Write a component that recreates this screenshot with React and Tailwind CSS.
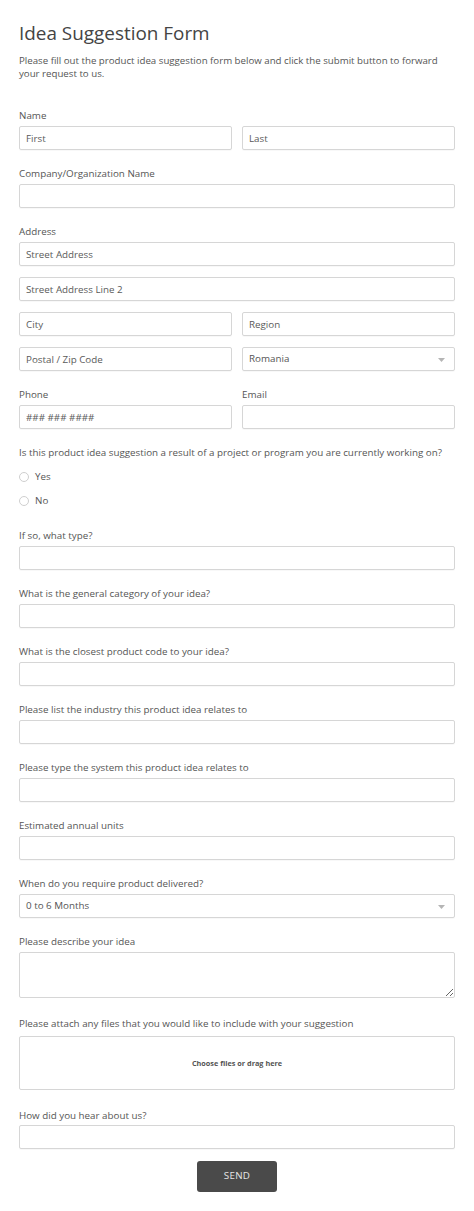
import React from "react";

const inputCls =
  "block w-full h-[24px] border border-[#d6d6d6] rounded-[2px] bg-white px-[6px] text-[9.8px] text-[#555] placeholder:text-[#5a5a5a] outline-none shadow-[0_1px_1px_rgba(0,0,0,0.03)]";

function Label({ children, className = "mb-[4px]" }) {
  return (
    <div className={"h-[13px] leading-[13px] text-[9.8px] text-[#555] whitespace-nowrap " + className}>
      {children}
    </div>
  );
}

function Field({ label, children, className = "mt-[17px]" }) {
  return (
    <div className={className}>
      <Label>{label}</Label>
      {children}
    </div>
  );
}

function Select({ value }) {
  return (
    <div className="relative flex items-center h-[24px] w-full border border-[#d6d6d6] rounded-[2px] bg-white px-[6px] text-[9.8px] text-[#555] shadow-[0_1px_1px_rgba(0,0,0,0.03)]">
      <span>{value}</span>
      <svg className="absolute right-[9px] top-[10px]" width="7" height="4" viewBox="0 0 7 4">
        <path d="M0 0 L7 0 L3.5 4 Z" fill="#b5b5b5" />
      </svg>
    </div>
  );
}

function Radio({ label }) {
  return (
    <div className="flex items-center h-[24px] gap-[6px]">
      <span className="w-[10px] h-[10px] rounded-full border border-[#cfcfcf] bg-white" />
      <span className="text-[9.8px] text-[#555]">{label}</span>
    </div>
  );
}

export default function App() {
  return (
    <div
      className="bg-white w-[474px] min-h-[1211px] px-[19px] pt-[20px]"
      style={{ fontFamily: '"Open Sans", "Liberation Sans", sans-serif' }}
    >
      <h1 className="text-[18.9px] leading-[26px] text-[#444] font-normal">Idea Suggestion Form</h1>
      <p className="mt-[8px] text-[9.7px] leading-[13px] text-[#555]">
        Please fill out the product idea suggestion form below and click the submit button to forward your request to us.
      </p>

      <div className="mt-[29px]">
        <Label>Name</Label>
        <div className="flex gap-[10px]">
          <input className={inputCls} placeholder="First" />
          <input className={inputCls} placeholder="Last" />
        </div>
      </div>

      <Field label="Company/Organization Name">
        <input className={inputCls} />
      </Field>

      <Field label="Address">
        <input className={inputCls} placeholder="Street Address" />
        <input className={inputCls + " mt-[11px]"} placeholder="Street Address Line 2" />
        <div className="flex gap-[10px] mt-[11px]">
          <input className={inputCls} placeholder="City" />
          <input className={inputCls} placeholder="Region" />
        </div>
        <div className="flex gap-[10px] mt-[11px]">
          <input className={inputCls} placeholder="Postal / Zip Code" />
          <Select value="Romania" />
        </div>
      </Field>

      <div className="flex gap-[10px] mt-[17px]">
        <div className="flex-1">
          <Label>Phone</Label>
          <input className={inputCls} placeholder="### ### ####" />
        </div>
        <div className="flex-1">
          <Label>Email</Label>
          <input className={inputCls} />
        </div>
      </div>

      <div className="mt-[17px]">
        <Label className="mb-[6px]">Is this product idea suggestion a result of a project or program you are currently working on?</Label>
        <Radio label="Yes" />
        <Radio label="No" />
      </div>

      <Field label="If so, what type?" className="mt-[16px]">
        <input className={inputCls} />
      </Field>
      <Field label="What is the general category of your idea?">
        <input className={inputCls} />
      </Field>
      <Field label="What is the closest product code to your idea?">
        <input className={inputCls} />
      </Field>
      <Field label="Please list the industry this product idea relates to">
        <input className={inputCls} />
      </Field>
      <Field label="Please type the system this product idea relates to">
        <input className={inputCls} />
      </Field>
      <Field label="Estimated annual units">
        <input className={inputCls} />
      </Field>
      <Field label="When do you require product delivered?">
        <Select value="0 to 6 Months" />
      </Field>
      <Field label="Please describe your idea">
        <textarea className="block w-full h-[46px] border border-[#d6d6d6] rounded-[2px] bg-white px-[6px] py-[4px] text-[9.8px] text-[#555] outline-none" />
      </Field>

      <div className="mt-[19px]">
        <Label className="mb-[6px]">Please attach any files that you would like to include with your suggestion</Label>
        <div className="flex items-center justify-center h-[54px] w-full border border-[#d6d6d6] rounded-[2px] bg-white">
          <span className="text-[7.3px] font-bold text-[#555]">Choose files or drag here</span>
        </div>
      </div>

      <div className="mt-[19px]">
        <Label className="mb-[3px]">How did you hear about us?</Label>
        <input className={inputCls} />
      </div>

      <div className="flex justify-center mt-[12px]">
        <button className="w-[80px] h-[31px] rounded-[3px] bg-[#4a4a4a] text-[#e6e6e6] text-[9.8px] tracking-[0.3px]">
          SEND
        </button>
      </div>
    </div>
  );
}
